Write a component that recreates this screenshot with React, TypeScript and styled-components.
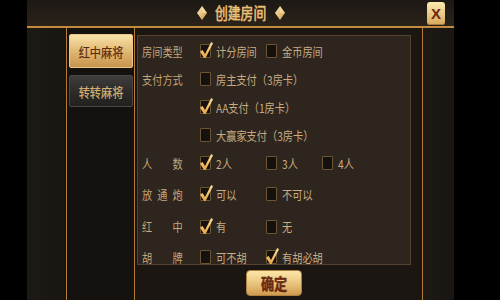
import React from "react";
import styled, { createGlobalStyle } from "styled-components";

const Global = createGlobalStyle`
  html, body { margin: 0; padding: 0; background: #000; }
  body {
    width: 500px; height: 300px; overflow: hidden;
    font-family: "Noto Sans CJK SC", "Noto Sans", sans-serif;
  }
`;

const Screen = styled.div`
  width: 500px;
  height: 300px;
  background: #000;
  display: flex;
`;

const Dialog = styled.div`
  margin-left: 27px;
  width: 427px;
  height: 300px;
  display: flex;
  flex-direction: column;
  background: #1b1612;
`;

const TitleBar = styled.div`
  height: 26px;
  border-bottom: 2px solid #c38b3e;
  background: linear-gradient(#1c1814, #2b231a);
  display: grid;
  grid-template-columns: 1fr auto 1fr;
  align-items: center;
`;

const TitleGroup = styled.div`
  grid-column: 2;
  display: flex;
  align-items: center;
  gap: 8px;
`;

const TitleText = styled.span`
  display: inline-block;
  width: 52px;
  font-size: 16px;
  line-height: 1;
  white-space: nowrap;
  transform: scaleX(0.8);
  transform-origin: left center;
  color: #e9c985;
  -webkit-text-stroke: 0.5px #e2bd75;
  text-shadow: 0 1px 0 #6b4a1e;
  margin-top: -2px;
`;

const CloseButton = styled.div`
  grid-column: 3;
  justify-self: end;
  align-self: start;
  margin-top: 2px;
  margin-right: 9px;
  width: 18px;
  height: 23px;
  border-radius: 3px;
  background: linear-gradient(#fdeab0, #d8a95c);
  box-shadow: inset 0 -1px 0 #a9793a;
  display: flex;
  align-items: center;
  justify-content: center;
  color: #6a2812;
  font-family: "Liberation Sans", sans-serif;
  font-weight: bold;
  font-size: 15px;
`;

const Body = styled.div`
  flex: 1;
  display: flex;
`;

const SideStrip = styled.div<{ $w: number }>`
  width: ${(p) => p.$w}px;
  background: linear-gradient(90deg, #1d1914, #191511);
`;

const Frame = styled.div`
  display: flex;
  border-left: 1px solid #b37c38;
  border-right: 1px solid #b37c38;
`;

const TabColumn = styled.div`
  width: 68px;
  border-right: 1px solid #b37c38;
  background: #15110e;
  display: flex;
  flex-direction: column;
  gap: 7px;
  padding: 6px 0 0 2px;
  box-sizing: border-box;
`;

const Tab = styled.div<{ $active?: boolean }>`
  width: 64px;
  height: ${(p) => (p.$active ? 34 : 32)}px;
  box-sizing: border-box;
  border-radius: 2px;
  display: flex;
  align-items: center;
  justify-content: center;
  background: ${(p) =>
    p.$active
      ? "linear-gradient(#f9e2a8, #dcb06b 60%, #c7944f)"
      : "linear-gradient(#3e3d3b, #2a2927 60%, #222120)"};
  border: 1px solid ${(p) => (p.$active ? "#eac688" : "#4a4846")};
  color: ${(p) => (p.$active ? "#5a2a0d" : "#d6b274")};
`;

const TabText = styled.span`
  display: inline-block;
  font-size: 13px;
  white-space: nowrap;
  transform: scaleX(0.86);
  -webkit-text-stroke: 0.2px currentColor;
`;

const ContentArea = styled.div`
  width: 287px;
  display: flex;
  flex-direction: column;
  align-items: flex-start;
  padding: 7px 0 0 2px;
  box-sizing: border-box;
`;

const Stack = styled.div`
  width: 274px;
  display: flex;
  flex-direction: column;
  align-items: center;
`;

const Panel = styled.div`
  width: 274px;
  height: 230px;
  box-sizing: border-box;
  border: 1px solid #54442f;
  background: #2d251e;
  padding: 1px 0 0 4px;
`;

const Row = styled.div<{ $h: number }>`
  height: ${(p) => p.$h}px;
  display: grid;
  grid-template-columns: 58px 66px 56px auto;
  align-items: center;
`;

const Label = styled.span`
  grid-column: 1;
  display: inline-block;
  font-size: 12px;
  color: #c2a57b;
  white-space: pre;
  transform: scaleX(0.85);
  transform-origin: left center;
`;

const OptionWrap = styled.div<{ $col: number }>`
  grid-column: ${(p) => p.$col};
  display: flex;
  align-items: center;
  gap: 5px;
  white-space: nowrap;
`;

const Box = styled.div`
  position: relative;
  width: 11px;
  height: 14px;
  box-sizing: border-box;
  border: 1.5px solid #6d5533;
  background: #14110e;
  border-radius: 1px;
  flex: none;
`;

const CheckMark = styled.svg`
  position: absolute;
  left: -2px;
  top: -4px;
  width: 14px;
  height: 17px;
  overflow: visible;
`;

const OptionText = styled.span`
  display: inline-block;
  font-size: 12px;
  color: #c9ad82;
  transform: scaleX(0.85);
  transform-origin: left center;
`;

const ConfirmButton = styled.div`
  margin-top: 5px;
  width: 56px;
  height: 26px;
  box-sizing: border-box;
  border-radius: 4px;
  border: 1px solid #b08040;
  background: linear-gradient(#fde6a8, #e7c27c 55%, #cf9c50);
  display: flex;
  align-items: center;
  justify-content: center;
  color: #6c2a10;
`;

const ConfirmText = styled.span`
  display: inline-block;
  font-size: 16px;
  font-weight: bold;
  transform: scaleX(0.82);
  -webkit-text-stroke: 0.5px #6c2a10;
  white-space: nowrap;
`;

const Diamond = () => (
  <svg width="10" height="14" viewBox="0 0 10 14">
    <defs>
      <linearGradient id="dg" x1="0" y1="0" x2="1" y2="1">
        <stop offset="0" stopColor="#fff1c4" />
        <stop offset="1" stopColor="#c9953f" />
      </linearGradient>
    </defs>
    <polygon points="5,0 10,7 5,14 0,7" fill="url(#dg)" />
    <polygon points="5,0 10,7 5,7" fill="#fbe2a0" opacity="0.6" />
  </svg>
);

const Check = () => (
  <CheckMark viewBox="0 0 14 17">
    <defs>
      <linearGradient id="cg" x1="0" y1="0" x2="0" y2="1">
        <stop offset="0" stopColor="#ffe39a" />
        <stop offset="1" stopColor="#e6a645" />
      </linearGradient>
    </defs>
    <path d="M1,10.5 L3.6,9 L6,13 L12.2,1 L14,2.2 L6.6,17 L5,17 Z" fill="url(#cg)" />
  </CheckMark>
);

type Opt = { text: string; checked?: boolean; col: number };

const Option = ({ text, checked, col }: Opt) => (
  <OptionWrap $col={col}>
    <Box>{checked && <Check />}</Box>
    <OptionText>{text}</OptionText>
  </OptionWrap>
);

const rows: { label: string; h: number; opts: Opt[] }[] = [
  { label: "房间类型", h: 28, opts: [{ text: "计分房间", checked: true, col: 2 }, { text: "金币房间", col: 3 }] },
  { label: "支付方式", h: 28, opts: [{ text: "房主支付（3房卡）", col: 2 }] },
  { label: "", h: 28, opts: [{ text: "AA支付（1房卡）", checked: true, col: 2 }] },
  { label: "", h: 28, opts: [{ text: "大赢家支付（3房卡）", col: 2 }] },
  { label: "人　　数", h: 28, opts: [{ text: "2人", checked: true, col: 2 }, { text: "3人", col: 3 }, { text: "4人", col: 4 }] },
  { label: "放\u2002通\u2002炮", h: 34, opts: [{ text: "可以", checked: true, col: 2 }, { text: "不可以", col: 3 }] },
  { label: "红　　中", h: 31, opts: [{ text: "有", checked: true, col: 2 }, { text: "无", col: 3 }] },
  { label: "胡　　牌", h: 30, opts: [{ text: "可不胡", col: 2 }, { text: "有胡必胡", checked: true, col: 3 }] },
];

export default function App() {
  return (
    <>
      <Global />
      <Screen>
        <Dialog>
          <TitleBar>
            <TitleGroup>
              <Diamond />
              <TitleText>创建房间</TitleText>
              <Diamond />
            </TitleGroup>
            <CloseButton>X</CloseButton>
          </TitleBar>
          <Body>
            <SideStrip $w={39} />
            <Frame>
              <TabColumn>
                <Tab $active>
                  <TabText>红中麻将</TabText>
                </Tab>
                <Tab>
                  <TabText>转转麻将</TabText>
                </Tab>
              </TabColumn>
              <ContentArea>
                <Stack>
                  <Panel>
                    {rows.map((r, i) => (
                      <Row key={i} $h={r.h}>
                        {r.label && <Label>{r.label}</Label>}
                        {r.opts.map((o, j) => (
                          <Option key={j} {...o} />
                        ))}
                      </Row>
                    ))}
                  </Panel>
                  <ConfirmButton>
                    <ConfirmText>确定</ConfirmText>
                  </ConfirmButton>
                </Stack>
              </ContentArea>
            </Frame>
            <SideStrip $w={30} />
          </Body>
        </Dialog>
      </Screen>
    </>
  );
}
